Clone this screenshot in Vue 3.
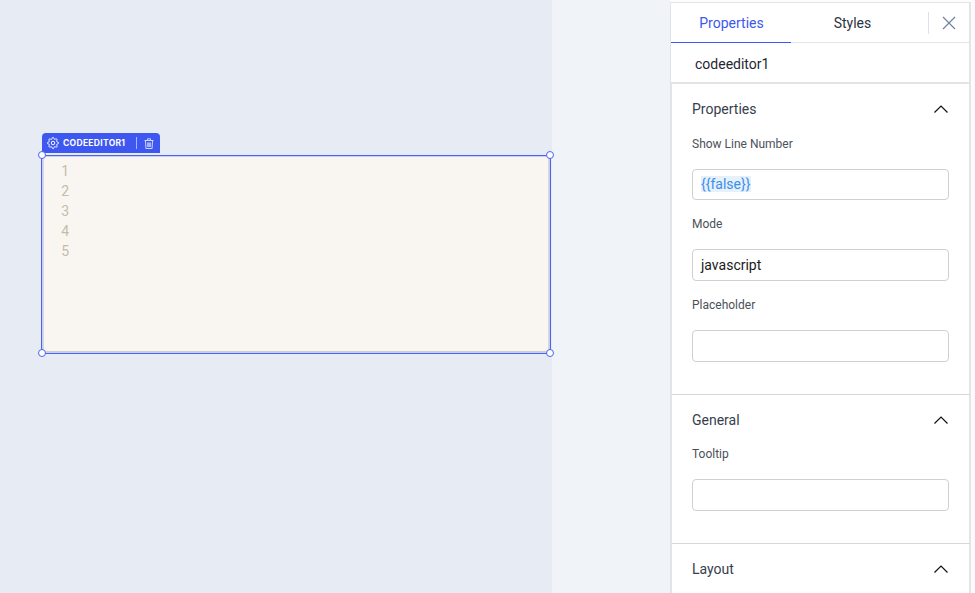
<script setup>
const lineNumbers = [1, 2, 3, 4, 5]
const sections = [
  { title: 'Properties', fields: [
    { label: 'Show Line Number', value: '{{false}}', selected: true },
    { label: 'Mode', value: 'javascript' },
    { label: 'Placeholder', value: '' },
  ] },
  { title: 'General', fields: [{ label: 'Tooltip', value: '' }] },
  { title: 'Layout', fields: [] },
]
</script>

<template>
  <div class="page">
    <main class="canvas">
      <div class="widget">
        <div class="tag">
          <svg class="gear" viewBox="0 0 24 24" width="12" height="12" fill="none" stroke="#fff" stroke-width="1.900">
            <circle cx="12" cy="12" r="3.500"/>
            <path d="M19.400 15a1.650 1.650 0 0 0 .33 1.820l.06.06a2 2 0 0 1-2.830 2.830l-.06-.06a1.650 1.650 0 0 0-2.820 1.170V21a2 2 0 0 1-4 0v-.09A1.650 1.650 0 0 0 7.260 19.700l-.06.06a2 2 0 0 1-2.830-2.830l.06-.06a1.650 1.650 0 0 0-1.170-2.820H3a2 2 0 0 1 0-4h.09A1.650 1.650 0 0 0 4.300 7.260l-.06-.06a2 2 0 0 1 2.830-2.830l.06.06a1.650 1.650 0 0 0 2.820-1.170V3a2 2 0 0 1 4 0v.09a1.650 1.650 0 0 0 2.790 1.170l.06-.06a2 2 0 0 1 2.830 2.830l-.06.06a1.650 1.650 0 0 0 1.170 2.820H21a2 2 0 0 1 0 4h-.09a1.650 1.650 0 0 0-1.510 1.090z"/>
          </svg>
          <span class="tag-name">CODEEDITOR1</span>
          <span class="tag-sep"></span>
          <svg viewBox="0 0 10 11" width="10" height="11" fill="none" stroke="#cdd5fd" stroke-width="1">
            <path d="M.5 2.500h9M3.500 2.500V.8h3v1.700"/>
            <path d="M1.500 2.500l.4 8h6.200l.4-8" />
            <path d="M3 4.500h4v4.500H3z" fill="#a9b5fb" stroke="none"/>
          </svg>
        </div>
        <div class="selection">
          <div class="editor">
            <div v-for="n in lineNumbers" :key="n" class="line-number">{{ n }}</div>
          </div>
          <span class="handle tl"></span>
          <span class="handle tr"></span>
          <span class="handle bl"></span>
          <span class="handle br"></span>
        </div>
      </div>
    </main>

    <aside class="panel">
      <div class="panel-inner">
        <nav class="tabs">
          <div class="tab active">Properties</div>
          <div class="tab styles">Styles</div>
          <div class="close-wrap">
            <svg viewBox="0 0 14 14" width="14" height="14" fill="none" stroke="#6f83a3" stroke-width="1.200">
              <path d="M1 1l12 12M13 1L1 13"/>
            </svg>
          </div>
        </nav>
        <div class="name-row">codeeditor1</div>
        <div class="sections">
          <section v-for="s in sections" :key="s.title" class="section">
            <header class="section-head">
              <span>{{ s.title }}</span>
              <svg viewBox="0 0 14 8" width="14" height="8" fill="none" stroke="#111" stroke-width="1.200">
                <path d="M.5 7.500L7 1l6.500 6.500"/>
              </svg>
            </header>
            <div v-for="f in s.fields" :key="f.label" class="field" :class="{ first: f.selected }">
              <div class="field-label">{{ f.label }}</div>
              <div class="input">
                <span :class="{ selected: f.selected }">{{ f.value }}</span>
              </div>
            </div>
          </section>
        </div>
      </div>
    </aside>
  </div>
</template>

<style>
html, body { margin: 0; padding: 0; overflow: hidden; }
</style>

<style scoped>
.page {
  display: flex;
  width: 975px;
  height: 593px;
  overflow: hidden;
  background: #f0f3f8;
  font-family: Roboto, "Liberation Sans", sans-serif;
}
.canvas {
  width: 552px;
  flex: none;
  background: #e7ebf3;
  padding: 133px 0 0 41px;
  box-sizing: border-box;
}
.widget { width: 510px; }
.tag {
  display: flex;
  align-items: center;
  width: 118px;
  height: 20px;
  margin-left: 1px;
  margin-bottom: 2px;
  padding-left: 5px;
  box-sizing: border-box;
  background: #3d57f0;
  border-radius: 4px 4px 0 0;
  color: #fff;
}
.tag-name {
  margin-left: 4px;
  font-family: Inter, "Liberation Sans", sans-serif;
  font-size: 8.500px;
  font-weight: 700;
  letter-spacing: .3px;
  line-height: 20px;
}
.tag-sep {
  width: 1px;
  height: 12px;
  margin: 0 7px 0 11px;
  background: #a9b5fb;
}
.selection {
  position: relative;
  width: 510px;
  height: 199px;
  box-sizing: border-box;
  border: 1px solid #4a63f3;
  padding: 1px;
  box-shadow: inset 0 0 0 1px rgba(74, 99, 243, .2);
}
.editor {
  height: 100%;
  box-sizing: border-box;
  background: #f9f6f1;
  border-right: 1px solid #d9d8d4;
  border-bottom: 1px solid #cfcdc8;
  border-left: 1px solid #d9d8d4;
  padding-top: 4px;
}
.line-number {
  width: 25px;
  text-align: right;
  font-size: 14px;
  line-height: 20px;
  color: #c5bca9;
}
.handle {
  position: absolute;
  width: 8px;
  height: 8px;
  box-sizing: border-box;
  border-radius: 50%;
  border: 1.500px solid #4a63f3;
  background: #fff;
}
.tl { left: -4px; top: -5px; }
.tr { right: -4px; top: -5px; }
.bl { left: -4px; bottom: -4px; }
.br { right: -4px; bottom: -4px; }

.panel {
  width: 305px;
  margin-left: 118px;
  flex: none;
  padding-top: 2px;
  box-sizing: border-box;
  background: #fcfcfd;
}
.panel-inner {
  width: 301px;
  height: 100%;
  box-sizing: border-box;
  background: #fff;
  border-top: 1px solid #e3e4e8;
  border-left: 1px solid #e0e3ea;
  border-right: 2px solid #e4e4e6;
}
.tabs {
  display: flex;
  align-items: stretch;
  height: 40px;
  border-bottom: 1px solid #e3e5ec;
  box-sizing: border-box;
}
.tab {
  width: 120px;
  margin-bottom: -1px;
  text-align: center;
  font-size: 14px;
  line-height: 40px;
  color: #2c3442;
}
.tab.active {
  color: #3d57f0;
  border-bottom: 1px solid #3d57f0;
  height: 40px;
  padding-left: 1px;
  box-sizing: border-box;
}
.tab.styles { width: 123px; }
.close-wrap {
  display: flex;
  align-items: center;
  justify-content: center;
  height: 22px;
  width: 40px;
  margin-top: 9px;
  margin-left: 14px;
  border-left: 1px solid #dfe1e6;
}
.name-row {
  height: 41px;
  padding-left: 24px;
  font-size: 14px;
  line-height: 43px;
  color: #1f2633;
  box-sizing: border-box;
  border-bottom: 2px solid #e4e4e4;
}
.sections {
  width: 298px;
  border-left: 1px solid #e4e4e4;
}
.section {
  padding: 0 21px 17px 20px;
  border-bottom: 1px solid #d8d8d8;
}
.section:first-child { margin-top: -1px; }
.section:last-child { border-bottom: 0; }
.section-head {
  display: flex;
  align-items: center;
  justify-content: space-between;
  height: 50px;
  padding-right: 1px;
  font-size: 14px;
  color: #36404d;
}
.section:first-child .section-head { height: 51px; }
.field-label {
  font-size: 12px;
  line-height: 18px;
  color: #4b515a;
}
.input {
  height: 32px;
  margin: 16px 0 15px;
  box-sizing: border-box;
  padding: 0 8px;
  border: 1px solid #cfd0d2;
  border-radius: 4px;
  font-size: 14px;
  line-height: 30px;
  color: #1a1a1a;
}
.first { padding-top: 1px; }
.first .input { height: 31px; line-height: 29px; }
.selected {
  display: inline-block;
  height: 16px;
  line-height: 16px;
  color: #3d8fe8;
  background: #e6f1fc;
}
</style>
